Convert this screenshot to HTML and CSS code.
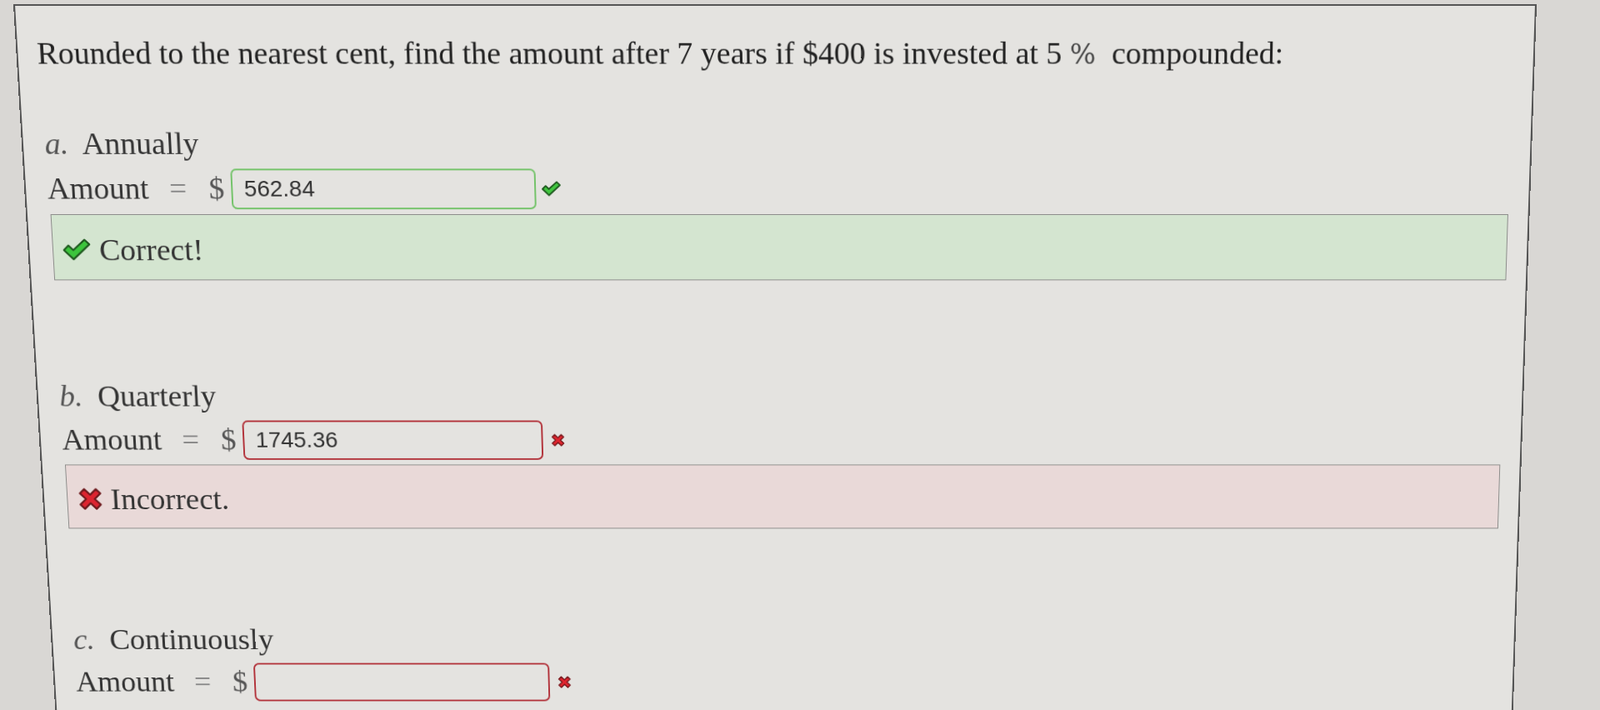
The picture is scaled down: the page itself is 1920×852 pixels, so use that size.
FILE: index.html
```html
<!DOCTYPE html>
<html lang="en">
<head>
    <meta charset="UTF-8">
    <meta name="viewport" content="width=device-width, initial-scale=1.0">
    <title>Compound Interest</title>
    <link rel="stylesheet" href="styles.css">
</head>
<body>
    <div class="frame">
        <p class="question">Rounded to the nearest cent, find the amount after 7 years if $400 is invested at 5&nbsp;<span class="pct">%</span>&nbsp; compounded:</p>

        <section class="part part-a">
            <div class="part-label"><i>a.</i> Annually</div>
            <div class="answer-row">
                <span class="var">Amount</span>
                <span class="eq">=</span>
                <span class="cur">$</span>
                <input class="answer ok" type="text" value="562.84">
                <svg class="mark" viewBox="0 0 26 20"><path d="M2 10 L6 6 L10 10 L20 1 L24 5 L10 18 Z" fill="#41c640" stroke="#1f5a1f" stroke-width="2" stroke-linejoin="round"/></svg>
            </div>
            <div class="feedback correct">
                <svg class="big-mark" viewBox="0 0 26 20"><path d="M2 10 L6 6 L10 10 L20 1 L24 5 L10 18 Z" fill="#3cc43c" stroke="#1f5a1f" stroke-width="1.6" stroke-linejoin="round"/></svg>
                <span>Correct!</span>
            </div>
        </section>

        <section class="part part-b">
            <div class="part-label"><i>b.</i> Quarterly</div>
            <div class="answer-row">
                <span class="var">Amount</span>
                <span class="eq">=</span>
                <span class="cur">$</span>
                <input class="answer bad" type="text" value="1745.36">
                <svg class="mark" viewBox="0 0 20 20"><path d="M3 6 L6 3 L10 7 L14 3 L17 6 L13 10 L17 14 L14 17 L10 13 L6 17 L3 14 L7 10 Z" fill="#e0242e" stroke="#7a1a1e" stroke-width="1.6" stroke-linejoin="round"/></svg>
            </div>
            <div class="feedback incorrect">
                <svg class="big-mark x" viewBox="0 0 20 20"><path d="M3 6 L6 3 L10 7 L14 3 L17 6 L13 10 L17 14 L14 17 L10 13 L6 17 L3 14 L7 10 Z" fill="#dc2430" stroke="#6e1a1e" stroke-width="1.3" stroke-linejoin="round"/></svg>
                <span>Incorrect.</span>
            </div>
        </section>

        <section class="part part-c">
            <div class="part-label"><i>c.</i> Continuously</div>
            <div class="answer-row">
                <span class="var">Amount</span>
                <span class="eq">=</span>
                <span class="cur">$</span>
                <input class="answer bad" type="text" value="">
                <svg class="mark" viewBox="0 0 20 20"><path d="M3 6 L6 3 L10 7 L14 3 L17 6 L13 10 L17 14 L14 17 L10 13 L6 17 L3 14 L7 10 Z" fill="#e0242e" stroke="#7a1a1e" stroke-width="1.6" stroke-linejoin="round"/></svg>
            </div>
        </section>
    </div>
</body>
</html>
```

FILE: styles.css
```css
html, body {
    height: 100%;
}

body {
    margin: 0;
    overflow: hidden;
    background: #d9d7d4;
    font-family: 'Liberation Serif', 'Times New Roman', serif;
    color: #333;
}

/* the page is photographed at a slight angle */
.frame {
    margin: 5px 0 0 16px;
    width: 1828px;
    height: 1000px;
    box-sizing: border-box;
    padding: 35px 24px 0 26px;
    background: #e4e3e0;
    border: 2px solid #555;
    transform-origin: 1171px 0;
    transform: perspective(1500px) rotateX(-4.35deg);
}

.question {
    margin: 0 0 0 -3px;
    font-size: 38px;
    line-height: 44px;
    color: #222;
}

.pct {
    font-family: 'DejaVu Serif', serif;
    font-size: 33px;
    color: #444;
}

.part-a {
    margin-top: 64px;
}

.part-b {
    margin-top: 123px;
}

.part-c {
    margin-top: 121px;
}

.part-label {
    font-size: 38px;
    line-height: 44px;
    color: #333;
}

.part-label i {
    color: #555;
    margin-right: 9px;
}

.answer-row {
    display: flex;
    align-items: center;
    margin-top: 9px;
    font-size: 37.5px;
    line-height: 44px;
}

.eq {
    color: #888;
    margin: 0 27px 0 25px;
}

.cur {
    color: #555;
    margin-right: 8px;
}

.answer {
    width: 370px;
    height: 50px;
    box-sizing: border-box;
    padding: 0 14px;
    background: transparent;
    border-radius: 7px;
    font-family: 'Liberation Sans', Arial, sans-serif;
    font-size: 28px;
    color: #333;
    outline: none;
}

.answer.ok {
    border: 2px solid #74c36a;
}

.answer.bad {
    border: 2px solid #b2323a;
}

.mark {
    width: 25px;
    height: 20px;
    margin-left: 6px;
}

.feedback {
    display: flex;
    align-items: center;
    margin: 6px 0 0 2px;
    padding: 21px 10px 15px;
    height: 82px;
    box-sizing: border-box;
    border: 1px solid #8c8c8a;
    font-size: 38px;
    line-height: 44px;
}

.feedback.correct {
    background: #d4e5d0;
}

.feedback.incorrect {
    background: #e9d9d8;
}

.big-mark {
    width: 37px;
    height: 29px;
    margin-right: 9px;
}

.big-mark.x {
    width: 36px;
    height: 36px;
    margin-right: 7px;
}
```
